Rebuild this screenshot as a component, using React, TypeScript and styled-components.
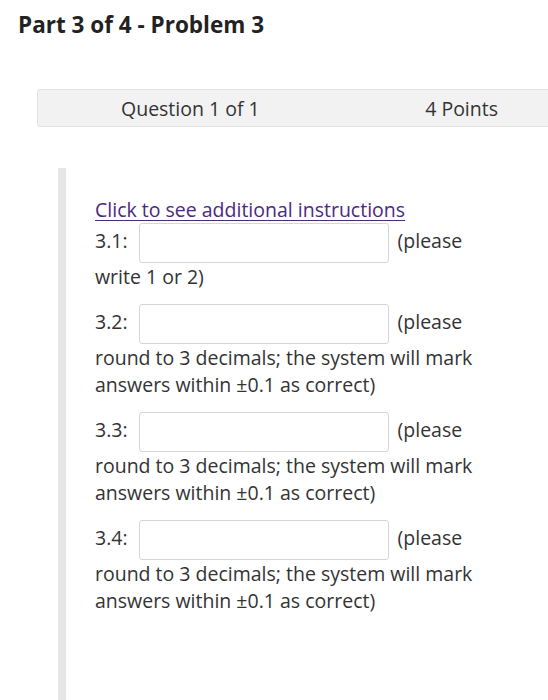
import React from "react";
import styled, { createGlobalStyle } from "styled-components";

const Global = createGlobalStyle`
  html, body { margin: 0; padding: 0; background: #ffffff; overflow-x: hidden; }
  body { font-family: "Open Sans", "Liberation Sans", sans-serif; color: #333333; }
`;

const Page = styled.div`
  width: 548px;
  height: 700px;
  overflow: hidden;
  display: flex;
  flex-direction: column;
`;

const Title = styled.h1`
  margin: 12px 0 0 18px;
  font-size: 22.5px;
  line-height: 26px;
  font-weight: 700;
  color: #222222;
`;

const QuestionBar = styled.div`
  margin: 51px 0 0 37px;
  width: 530px;
  height: 38px;
  flex-shrink: 0;
  box-sizing: border-box;
  background: #f2f2f3;
  border: 1px solid #e2e2e4;
  border-radius: 3px;
  display: flex;
  align-items: center;
  padding: 0 68px 0 83px;
  font-size: 19.5px;
  color: #333333;
`;

const BarRight = styled.span`
  margin-left: auto;
`;

const Body = styled.div`
  margin: 41px 0 0 58px;
  flex: 1;
  border-left: 8px solid #e6e6e6;
  padding: 28px 58px 0 29px;
  font-size: 19.5px;
  line-height: 27px;
`;

const Link = styled.a`
  color: #4a2a7e;
  text-decoration: underline;
  text-underline-offset: 3px;
  text-decoration-thickness: 1px;
  cursor: pointer;
`;

const Item = styled.p`
  margin: 0 0 14px 0;
`;

const Label = styled.span`
  margin-right: 11px;
`;

const Field = styled.input`
  display: inline-block;
  box-sizing: border-box;
  width: 250px;
  height: 40px;
  margin: 0 9px 0 0;
  vertical-align: middle;
  border: 1px solid #d6d6d6;
  border-radius: 3px;
  background: #ffffff;
  font: inherit;
`;

const items = [
  { label: "3.1:", text: "(please write 1 or 2)" },
  { label: "3.2:", text: "(please round to 3 decimals; the system will mark answers within ±0.1 as correct)" },
  { label: "3.3:", text: "(please round to 3 decimals; the system will mark answers within ±0.1 as correct)" },
  { label: "3.4:", text: "(please round to 3 decimals; the system will mark answers within ±0.1 as correct)" },
];

export default function App() {
  return (
    <Page>
      <Global />
      <Title>Part 3 of 4 - Problem 3</Title>
      <QuestionBar>
        <span>Question 1 of 1</span>
        <BarRight>4 Points</BarRight>
      </QuestionBar>
      <Body>
        <Link>Click to see additional instructions</Link>
        {items.map((it) => (
          <Item key={it.label}>
            <Label>{it.label}</Label>
            <Field type="text" />
            <span>{it.text}</span>
          </Item>
        ))}
      </Body>
    </Page>
  );
}
